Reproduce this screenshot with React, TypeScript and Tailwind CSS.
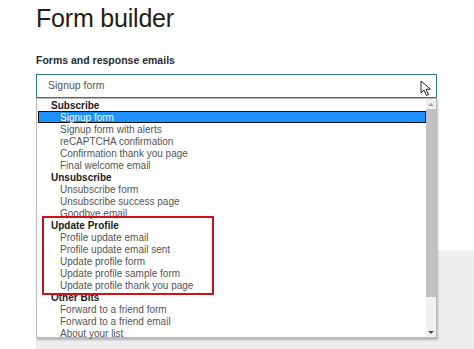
import React from 'react';

type Row = { label: string; group?: boolean; selected?: boolean };

const rows: Row[] = [
  { label: 'Subscribe', group: true },
  { label: 'Signup form', selected: true },
  { label: 'Signup form with alerts' },
  { label: 'reCAPTCHA confirmation' },
  { label: 'Confirmation thank you page' },
  { label: 'Final welcome email' },
  { label: 'Unsubscribe', group: true },
  { label: 'Unsubscribe form' },
  { label: 'Unsubscribe success page' },
  { label: 'Goodbye email' },
  { label: 'Update Profile', group: true },
  { label: 'Profile update email' },
  { label: 'Profile update email sent' },
  { label: 'Update profile form' },
  { label: 'Update profile sample form' },
  { label: 'Update profile thank you page' },
  { label: 'Other Bits', group: true },
  { label: 'Forward to a friend form' },
  { label: 'Forward to a friend email' },
  { label: 'About your list' },
];

function Pointer() {
  return (
    <svg width="12" height="17" viewBox="0 0 12 17" className="absolute right-[4px] top-[5px]">
      <path d="M1 1 L1 13 L4 10 L6.5 15.5 L8.5 14.5 L6 9.2 L10.5 9.2 Z" fill="#fff" stroke="#222" strokeWidth="1" strokeLinejoin="round" />
    </svg>
  );
}

function Scrollbar() {
  return (
    <div className="flex w-[10px] flex-col bg-[#f0f0f0]">
      <div className="flex h-[10px] items-center justify-center">
        <div className="h-0 w-0 border-x-[3px] border-b-[3px] border-x-transparent border-b-[#a3a3a3]" />
      </div>
      <div className="h-[188px] bg-[#c1c1c1]" />
      <div className="flex-1" />
      <div className="flex h-[10px] items-center justify-center">
        <div className="h-0 w-0 border-x-[3px] border-t-[3px] border-x-transparent border-t-[#505050]" />
      </div>
    </div>
  );
}

export default function App() {
  return (
    <div className="relative h-[349px] w-[474px] overflow-hidden bg-white font-['Liberation_Sans',Arial,sans-serif] text-[#241c15]">
      <div className="absolute left-[36px] top-[251px] h-[120px] w-[460px] bg-[#eeeeee]" />
      <div className="relative px-[36px] pt-[3px]">
        <h1 className="text-[25px] leading-[30px] tracking-[-0.2px]">Form builder</h1>
        <div className="mt-[20px] text-[10.5px] font-bold leading-[14px] text-[#2b2b2b]">Forms and response emails</div>
        <div className="relative mt-[7px] h-[24px] w-[401px] border-[1.5px] border-[#2f7b7c] bg-white pl-[11px] text-[10.5px] leading-[21px] text-[#555]">
          Signup form
          <Pointer />
        </div>
        <div className="relative flex h-[240px] w-[401px] border border-[#b9b9b9] bg-white shadow-[1px_2px_2px_rgba(0,0,0,0.25)]">
          <div className="flex-1 pl-[1px]">
            {rows.map((r) =>
              r.selected ? (
                <div
                  key={r.label}
                  className="h-[12px] border border-[#111] bg-[#1e90ff] pl-[21px] pt-[1px] text-[10px] leading-[9px] text-white"
                >
                  {r.label}
                </div>
              ) : (
                <div
                  key={r.label}
                  className={
                    r.group
                      ? 'h-[12px] pl-[13px] pt-[1px] text-[10px] font-bold leading-[11px] text-[#1a1a1a]'
                      : 'h-[12px] pl-[22px] pt-[1px] text-[10px] leading-[11px] text-[#555]'
                  }
                >
                  {r.label}
                </div>
              ),
            )}
          </div>
          <Scrollbar />
          <div className="absolute left-[5px] top-[117px] h-[79px] w-[172px] border-[2.5px] border-[#d0101b]" />
        </div>
      </div>
    </div>
  );
}
